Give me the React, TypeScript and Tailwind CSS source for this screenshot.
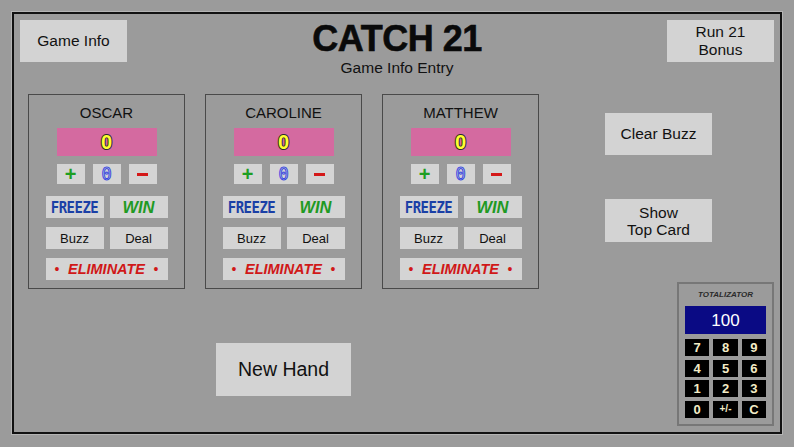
import React from "react";

const players = ["OSCAR", "CAROLINE", "MATTHEW"];
const keys = ["7", "8", "9", "4", "5", "6", "1", "2", "3", "0", "+/-", "C"];

function PlayerCard({ name }: { name: string }) {
  return (
    <div className="w-[157px] h-[195px] border border-[#4a4a4a] flex flex-col items-center pt-[10px]">
      <div className="h-[15px] leading-[15px] text-[15px] text-[#111]">{name}</div>
      <div className="mt-[8px] w-[100px] h-[28px] bg-[#d46aa0] flex items-center justify-center">
        <span className="text-[20px] leading-none font-bold text-[#ffff30] [-webkit-text-stroke:2px_#2a2a2a] [paint-order:stroke_fill]">
          0
        </span>
      </div>
      <div className="mt-[8px] flex gap-[8px] h-[20px]">
        <div className="w-[28px] h-[20px] bg-[#d4d4d4] flex items-center justify-center text-[20px] leading-none font-bold text-[#1e9e22]">
          +
        </div>
        <div className="w-[28px] h-[20px] bg-[#d4d4d4] flex items-center justify-center">
          <span className="font-['DejaVu_Sans_Mono',monospace] text-[17px] leading-none text-transparent [-webkit-text-stroke:1px_#3848e0]">
            0
          </span>
        </div>
        <div className="w-[28px] h-[20px] bg-[#d4d4d4] flex items-center justify-center">
          <span className="block w-[11px] h-[3px] bg-[#d41818]" />
        </div>
      </div>
      <div className="mt-[12px] grid grid-cols-[58px_58px] gap-x-[6px] gap-y-[9px]">
        <div className="h-[22px] bg-[#d4d4d4] flex items-center justify-center">
          <span className="font-['DejaVu_Sans_Mono',monospace] font-bold text-[14px] leading-none tracking-[-0.5px] text-[#1a3fa6] scale-y-[1.1]">
            FREEZE
          </span>
        </div>
        <div className="h-[22px] bg-[#d4d4d4] flex items-center justify-center font-bold italic text-[16.5px] leading-none text-[#1f9a24]">
          WIN
        </div>
        <div className="h-[22px] bg-[#d4d4d4] flex items-center justify-center text-[13px] leading-none text-[#111]">
          Buzz
        </div>
        <div className="h-[22px] bg-[#d4d4d4] flex items-center justify-center text-[13px] leading-none text-[#111]">
          Deal
        </div>
        <div className="col-span-2 h-[22px] bg-[#d4d4d4] flex items-center justify-between px-[9px] text-[#d01818]">
          <span className="text-[14px] leading-none">•</span>
          <span className="font-bold italic text-[14.5px] leading-none">ELIMINATE</span>
          <span className="text-[14px] leading-none">•</span>
        </div>
      </div>
    </div>
  );
}

function Totalizator() {
  return (
    <div className="self-end w-[97px] h-[144px] border-2 border-[#777] flex flex-col items-center px-[6px]">
      <div className="mt-[6px] text-[8px] leading-[10px] font-bold italic text-[#2a2a2a]">TOTALIZATOR</div>
      <div className="mt-[6px] w-[81px] h-[28px] bg-[#0a0a84] flex items-center justify-center text-[17px] leading-none text-white">
        100
      </div>
      <div className="mt-[5px] grid grid-cols-3 gap-x-[4px] gap-y-[3.5px] w-[81px]">
        {keys.map((k) => (
          <div
            key={k}
            className="h-[17px] bg-black flex items-center justify-center text-[13px] leading-none font-bold text-[#f3ecc6]"
          >
            {k === "+/-" ? <span className="text-[10px]">+/-</span> : k}
          </div>
        ))}
      </div>
    </div>
  );
}

export default function App() {
  return (
    <div className="w-[794px] h-[447px] bg-[#9b9b9b] p-[12px] font-['Liberation_Sans',Arial,sans-serif] text-[#111] overflow-hidden">
      <div className="w-[770px] h-[422px] border-2 border-[#111] shadow-[0_0_0_1px_#b4b4b4] flex flex-col px-[6px] pt-[6px]">
        {/* header */}
        <div className="grid grid-cols-[1fr_auto_1fr] items-start">
          <div className="w-[107px] h-[42px] bg-[#d3d3d3] flex items-center justify-center text-[15.5px] leading-none">
            Game Info
          </div>
          <div className="flex flex-col items-center mt-[1px]">
            <div className="text-[36px] leading-[36px] font-bold tracking-[-0.5px] text-[#0a0a0a] [-webkit-text-stroke:0.6px_#0a0a0a]">
              CATCH 21
            </div>
            <div className="mt-[3px] text-[15.5px] leading-[16px]">Game Info Entry</div>
          </div>
          <div className="justify-self-end w-[107px] h-[42px] bg-[#d3d3d3] flex flex-col items-center justify-center text-[15.5px] leading-[18px] text-center">
            <span>Run 21</span>
            <span>Bonus</span>
          </div>
        </div>

        {/* body */}
        <div className="flex items-start">
          <div className="pl-[8px] mt-[18px] flex flex-col">
            <div className="flex gap-[20px]">
              {players.map((p) => (
                <PlayerCard key={p} name={p} />
              ))}
            </div>
            <div className="mt-[54px] ml-[188px] w-[135px] h-[53px] bg-[#d3d3d3] flex items-center justify-center text-[19.5px] leading-none">
              New Hand
            </div>
          </div>

          <div className="ml-[66px] mt-[37px] w-[169px] flex flex-col">
            <div className="w-[107px] h-[42px] bg-[#d3d3d3] flex items-center justify-center text-[15.5px] leading-none">
              Clear Buzz
            </div>
            <div className="mt-[44px] w-[107px] h-[43px] bg-[#d3d3d3] flex flex-col items-center justify-center text-[15.5px] leading-[17px] text-center">
              <span>Show</span>
              <span>Top Card</span>
            </div>
            <div className="mt-[40px] flex flex-col">
              <Totalizator />
            </div>
          </div>
        </div>
      </div>
    </div>
  );
}
